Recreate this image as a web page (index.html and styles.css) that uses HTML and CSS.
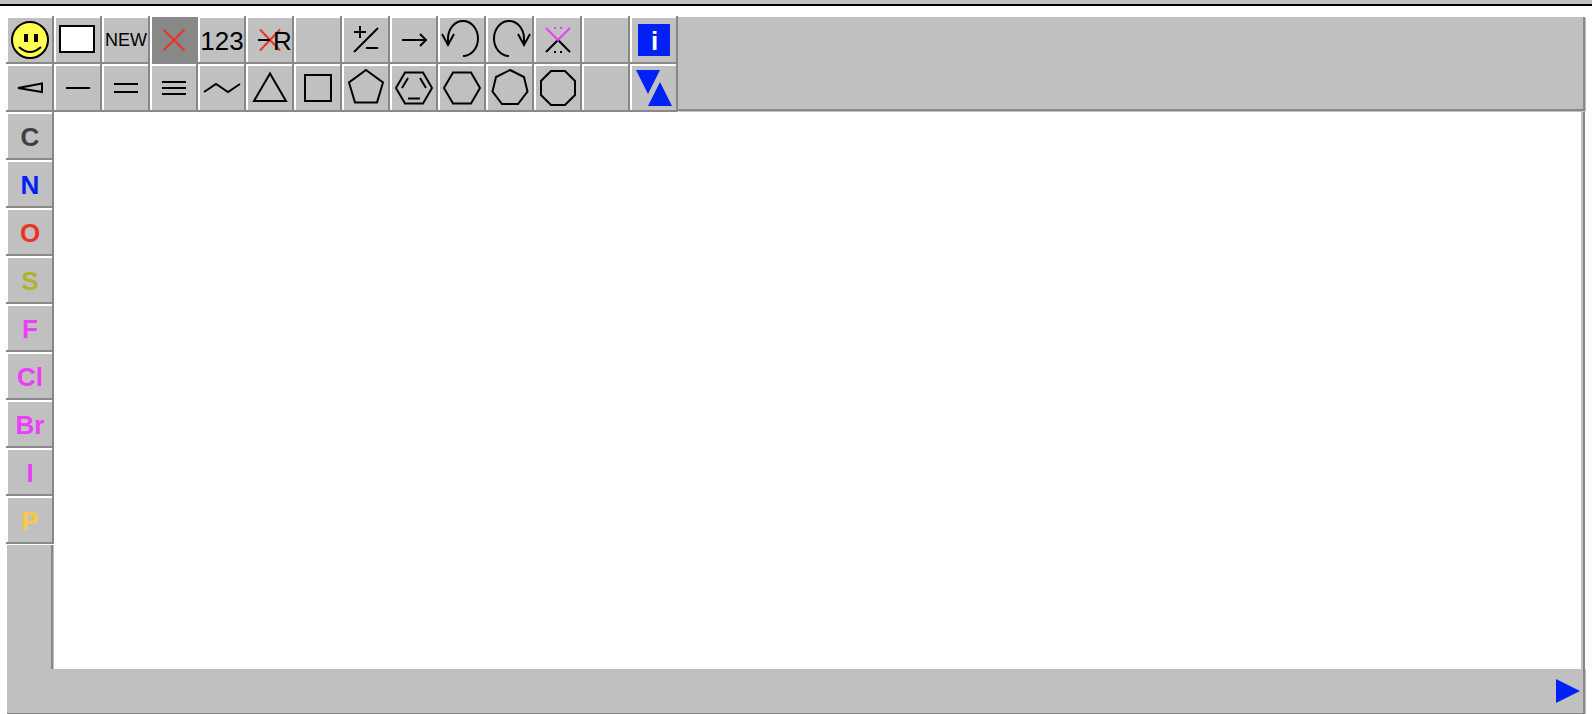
FILE: index.html
```html
<!DOCTYPE html>
<html lang="en">
<head>
<meta charset="utf-8">
<title>Molecule editor</title>
<link rel="stylesheet" href="styles.css">
</head>
<body>
<header class="topline"></header>
<main class="editor">
  <div class="toolbar">
    <div class="tools" role="toolbar" aria-label="Drawing tools">
      <button class="cell" aria-label="SMILES"><svg viewBox="2 2 44 44"><circle cx="24" cy="24" r="18" class="face"/><path class="solid" d="M18 18h4v8h-4zM28 18h4v8h-4z"/><path d="M13 31Q24 41 35 31"/></svg></button>
      <button class="cell" aria-label="Clear canvas"><svg viewBox="2 2 44 44"><rect x="6" y="10" width="34" height="26" class="paper"/></svg></button>
      <button class="cell small">NEW</button>
      <button class="cell pressed" aria-label="Delete" aria-pressed="true"><svg viewBox="2 2 44 44"><path class="red" d="M13.5 13.5l21 21M34.5 13.5l-21 21"/></svg></button>
      <button class="cell number">123</button>
      <button class="cell" aria-label="Delete group"><svg viewBox="2 2 44 44"><path class="red" d="M14 13.500l20 21M34 13.500l-20 21"/><path d="M12 24h12"/><text x="27" y="34">R</text></svg></button>
      <button class="cell" aria-label="Blank" disabled></button>
      <button class="cell" aria-label="Charge"><svg viewBox="2 2 44 44"><path d="M12 16h12M18 10v12M12 36L36 12M24 32h12"/></svg></button>
      <button class="cell" aria-label="Reaction"><svg viewBox="2 2 44 44"><path d="M12 24h24M30 18l6 6-6 6"/></svg></button>
      <button class="cell" aria-label="Undo"><svg viewBox="2 2 44 44"><path d="M25 40A15 17.500 0 1 0 10 22.500V29M4 18l6 11 6-11"/></svg></button>
      <button class="cell" aria-label="Redo"><svg viewBox="2 2 44 44"><path d="M23 40A15 17.500 0 1 1 38 22.500V29M32 18l6 11 6-11"/></svg></button>
      <button class="cell" aria-label="Functional groups"><svg viewBox="2 2 44 44"><path d="M12 36l12-12 12 12"/><path class="pink" d="M12 12l12 12 12-12"/><path class="solid" d="M20 35h2v2h-2zM26 35h2v2h-2z"/><path class="pink-fill" d="M20 11h2v2h-2zM26 11h2v2h-2z"/></svg></button>
      <button class="cell" aria-label="Blank" disabled></button>
      <button class="cell" aria-label="Information"><svg viewBox="2 2 44 44"><path class="blue" d="M8 8h32v32H8z"/><text x="21" y="34" class="info">i</text></svg></button>

      <button class="cell" aria-label="Stereo bond"><svg viewBox="2 2 44 44"><path d="M12 24l24-4.500v8.500z"/></svg></button>
      <button class="cell" aria-label="Single bond"><svg viewBox="2 2 44 44"><path d="M12 24h24"/></svg></button>
      <button class="cell" aria-label="Double bond"><svg viewBox="2 2 44 44"><path d="M12 20h24M12 28h24"/></svg></button>
      <button class="cell" aria-label="Triple bond"><svg viewBox="2 2 44 44"><path d="M12 18h24M12 24h24M12 30h24"/></svg></button>
      <button class="cell" aria-label="Chain"><svg viewBox="2 2 44 44"><path d="M6 28l12-8 12 8 12-8"/></svg></button>
      <button class="cell" aria-label="Cyclopropane"><svg viewBox="2 2 44 44"><path d="M24 9.500L40 37H8z"/></svg></button>
      <button class="cell" aria-label="Cyclobutane"><svg viewBox="2 2 44 44"><path d="M11 11h26v26H11z"/></svg></button>
      <button class="cell" aria-label="Cyclopentane"><svg viewBox="2 2 44 44"><path d="M24 6l17 12.500-6 20H13l-6-20z"/></svg></button>
      <button class="cell" aria-label="Benzene"><svg viewBox="2 2 44 44"><path d="M6 24l9-15.500h18L42 24l-9 15.500H15zM18 14l-6 10M30 14l6 10M18 34.500h12"/></svg></button>
      <button class="cell" aria-label="Cyclohexane"><svg viewBox="2 2 44 44"><path d="M6 24l9-15.500h18L42 24l-9 15.500H15z"/></svg></button>
      <button class="cell" aria-label="Cycloheptane"><svg viewBox="2 2 44 44"><path d="M24 6l14 7 3.500 14.500L32 40H16L6.500 27.500 10 13z"/></svg></button>
      <button class="cell" aria-label="Cyclooctane"><svg viewBox="2 2 44 44"><path d="M17 7h14l10 10v14L31 41H17L7 31V17z"/></svg></button>
      <button class="cell" aria-label="Blank" disabled></button>
      <button class="cell" aria-label="Switch view"><svg viewBox="2 2 44 44"><path class="blue" d="M6 6h24L18 30zM18 42h24L30 18z"/></svg></button>
    </div>
    <div class="toolbar-rest"></div>
  </div>
  <div class="workspace">
    <div class="rail">
      <div class="elements" role="toolbar" aria-label="Elements">
        <button class="cell atom carbon">C</button>
        <button class="cell atom nitrogen">N</button>
        <button class="cell atom oxygen">O</button>
        <button class="cell atom sulfur">S</button>
        <button class="cell atom halogen">F</button>
        <button class="cell atom halogen">Cl</button>
        <button class="cell atom halogen">Br</button>
        <button class="cell atom halogen">I</button>
        <button class="cell atom phosphorus">P</button>
      </div>
      <div class="rail-rest"></div>
    </div>
    <section class="drawing" aria-label="Drawing area"></section>
  </div>
  <footer class="status">
    <button class="play" aria-label="Menu"><svg viewBox="0 0 24 24"><path class="blue" d="M0 0l24 12L0 24z"/></svg></button>
  </footer>
</main>
</body>
</html>
```
FILE: styles.css
```css
:root {
  --face: #c0c0c0;
  --shade: #888;
  --blue: #0021f5;
  --red: #ea3323;
  --pink: #ea3ff7;
}
* { box-sizing: border-box; }
body {
  margin: 0;
  min-height: 100vh;
  display: flex;
  flex-direction: column;
  background: #fff;
  font-family: "Liberation Sans", Arial, sans-serif;
}
.topline {
  height: 6px;
  background: var(--face);
  border-bottom: 2px solid #000;
}
.editor {
  flex: 1;
  display: flex;
  flex-direction: column;
  margin: 10px 6px 0;
}
.toolbar { display: flex; }
.tools {
  display: grid;
  grid-template-columns: repeat(14, 48px);
}
.cell {
  display: flex;
  align-items: center;
  justify-content: center;
  width: 48px;
  height: 48px;
  padding: 0;
  border: 0;
  background:
    linear-gradient(var(--shade), var(--shade)) right / 2px 100% no-repeat,
    linear-gradient(var(--shade), var(--shade)) bottom / 100% 2px no-repeat,
    linear-gradient(#fff, #fff) left / 2px 100% no-repeat,
    linear-gradient(#fff, #fff) top / 100% 2px no-repeat,
    var(--face);
  color: #000;
  font-family: inherit;
  white-space: nowrap;
}
.pressed {
  background:
    linear-gradient(#fff, #fff) left / 2px 100% no-repeat,
    linear-gradient(#fff, #fff) top / 100% 1px no-repeat,
    var(--shade);
}
.cell svg {
  display: block;
  width: 44px;
  height: 44px;
  fill: none;
  stroke: #000;
  stroke-width: 2;
}
.cell text {
  fill: #000;
  stroke: none;
  font-size: 26px;
}
.cell .info { fill: #fff; font-weight: bold; }
.cell .face { fill: #ffff54; }
.cell .paper { fill: #fff; }
.cell .solid { fill: #000; stroke: none; }
.red { stroke: var(--red); }
.pink { stroke: var(--pink); }
.pink-fill { fill: var(--pink); stroke: none; }
.blue { fill: var(--blue); stroke: none; }
.small { font-size: 18px; }
.number { font-size: 26px; padding-top: 2px; }
.toolbar-rest {
  flex: 1;
  margin-top: 1px;
  background: var(--face);
  border: solid var(--shade);
  border-width: 0 2px 2px 0;
  box-shadow: inset 0 0 0 0 var(--shade);
  margin-right: 1px;
  margin-bottom: 1px;
  outline: 0;
  box-shadow: 1px 1px 0 var(--face);
}
.workspace { flex: 1; display: flex; }
.rail {
  width: 48px;
  display: flex;
  flex-direction: column;
}
.atom { font-size: 26px; font-weight: bold; padding-top: 2px; }
.carbon { color: #404040; }
.nitrogen { color: var(--blue); }
.oxygen { color: var(--red); }
.sulfur { color: #b2b232; }
.halogen { color: var(--pink); }
.phosphorus { color: #f7c945; }
.rail-rest {
  flex: 1;
  margin: 1px 1px 0;
  background: var(--face);
  border-right: 2px solid var(--shade);
  box-shadow: 1px 0 0 var(--face);
}
.drawing {
  flex: 1;
  margin-right: 1px;
  background: #fff;
  border-right: 2px solid var(--shade);
  box-shadow: inset -2px 0 0 var(--face);
}
.status {
  display: flex;
  justify-content: flex-end;
  align-items: center;
  height: 45px;
  margin: 0 1px;
  padding-right: 3px;
  background: var(--face);
  border: solid var(--shade);
  border-width: 0 2px 1px 0;
  box-shadow: 1px 0 0 var(--face);
}
.play {
  width: 24px;
  height: 24px;
  padding: 0;
  border: 0;
  background: none;
}
.play svg { display: block; }
```
